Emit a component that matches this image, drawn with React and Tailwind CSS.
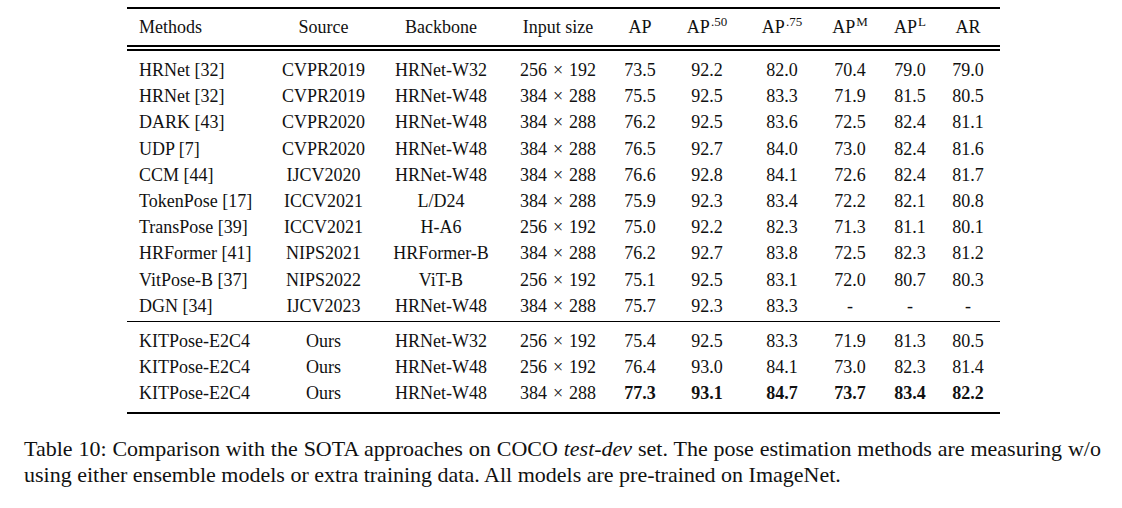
import React from 'react';

const cols = [
  'w-[140px] pl-3 text-left',
  'w-[113px] text-center',
  'w-[122px] text-center',
  'w-[112px] text-center',
  'w-[52px] text-center',
  'w-[82px] text-center',
  'w-[68px] text-center',
  'w-[68px] text-center',
  'w-[52px] text-center',
  'w-[64px] text-center',
];

const baseRows = [
  ['HRNet [32]', 'CVPR2019', 'HRNet-W32', '256 192', '73.5', '92.2', '82.0', '70.4', '79.0', '79.0'],
  ['HRNet [32]', 'CVPR2019', 'HRNet-W48', '384 288', '75.5', '92.5', '83.3', '71.9', '81.5', '80.5'],
  ['DARK [43]', 'CVPR2020', 'HRNet-W48', '384 288', '76.2', '92.5', '83.6', '72.5', '82.4', '81.1'],
  ['UDP [7]', 'CVPR2020', 'HRNet-W48', '384 288', '76.5', '92.7', '84.0', '73.0', '82.4', '81.6'],
  ['CCM [44]', 'IJCV2020', 'HRNet-W48', '384 288', '76.6', '92.8', '84.1', '72.6', '82.4', '81.7'],
  ['TokenPose [17]', 'ICCV2021', 'L/D24', '384 288', '75.9', '92.3', '83.4', '72.2', '82.1', '80.8'],
  ['TransPose [39]', 'ICCV2021', 'H-A6', '256 192', '75.0', '92.2', '82.3', '71.3', '81.1', '80.1'],
  ['HRFormer [41]', 'NIPS2021', 'HRFormer-B', '384 288', '76.2', '92.7', '83.8', '72.5', '82.3', '81.2'],
  ['VitPose-B [37]', 'NIPS2022', 'ViT-B', '256 192', '75.1', '92.5', '83.1', '72.0', '80.7', '80.3'],
  ['DGN [34]', 'IJCV2023', 'HRNet-W48', '384 288', '75.7', '92.3', '83.3', '-', '-', '-'],
];

const oursRows = [
  ['KITPose-E2C4', 'Ours', 'HRNet-W32', '256 192', '75.4', '92.5', '83.3', '71.9', '81.3', '80.5'],
  ['KITPose-E2C4', 'Ours', 'HRNet-W48', '256 192', '76.4', '93.0', '84.1', '73.0', '82.3', '81.4'],
  ['KITPose-E2C4', 'Ours', 'HRNet-W48', '384 288', '77.3', '93.1', '84.7', '73.7', '83.4', '82.2', true],
];

const Sup = ({ children }) => (
  <sup className="text-[13px] -top-[7px] ml-[1px]">{children}</sup>
);

// "256 192" -> "256 × 192" with math spacing
const Size = ({ value }) => {
  const [a, b] = value.split(' ');
  return (
    <>
      {a}
      <span className="mx-[6px]">×</span>
      {b}
    </>
  );
};

const headers = [
  'Methods',
  'Source',
  'Backbone',
  'Input size',
  'AP',
  <>AP<Sup>.50</Sup></>,
  <>AP<Sup>.75</Sup></>,
  <>AP<Sup>M</Sup></>,
  <>AP<Sup>L</Sup></>,
  'AR',
];

const Row = ({ cells, best }) => (
  <div className="flex items-center h-[26.2px]">
    {cells.slice(0, 10).map((c, i) => (
      <div key={i} className={`${cols[i]} ${best && i >= 4 ? 'font-bold' : ''}`}>
        {i === 3 ? <Size value={c} /> : c}
      </div>
    ))}
  </div>
);

const App = () => {
  return (
    <div
      className="w-[1122px] h-[508px] bg-white text-[#111] overflow-hidden"
      style={{ fontFamily: '"Liberation Serif", "Times New Roman", serif' }}
    >
      <div className="ml-[127px] w-[873px] pt-[7px] text-[18px] leading-none">
        <div className="h-[2px] bg-black" />
        <div className="flex items-center h-[36px]">
          {headers.map((h, i) => (
            <div key={i} className={cols[i]}>{h}</div>
          ))}
        </div>
        <div className="h-[2px] bg-black" />
        <div className="h-[2px]" />
        <div className="h-[2px] bg-black" />
        <div className="pt-[6px] pb-[2px]">
          {baseRows.map((r, i) => <Row key={i} cells={r} />)}
        </div>
        <div className="h-px bg-black" />
        <div className="pt-[6px] pb-[6px]">
          {oursRows.map((r, i) => <Row key={i} cells={r} best={r[10]} />)}
        </div>
        <div className="h-[2px] bg-black" />
      </div>

      <p className="ml-[24px] w-[1077px] mt-[22px] text-[22px] leading-[26px] text-justify">
        Table 10: Comparison with the SOTA approaches on COCO <i>test-dev</i> set. The pose estimation methods are measuring w/o using either ensemble models or extra training data. All models are pre-trained on ImageNet.
      </p>
    </div>
  );
};

export default App;
